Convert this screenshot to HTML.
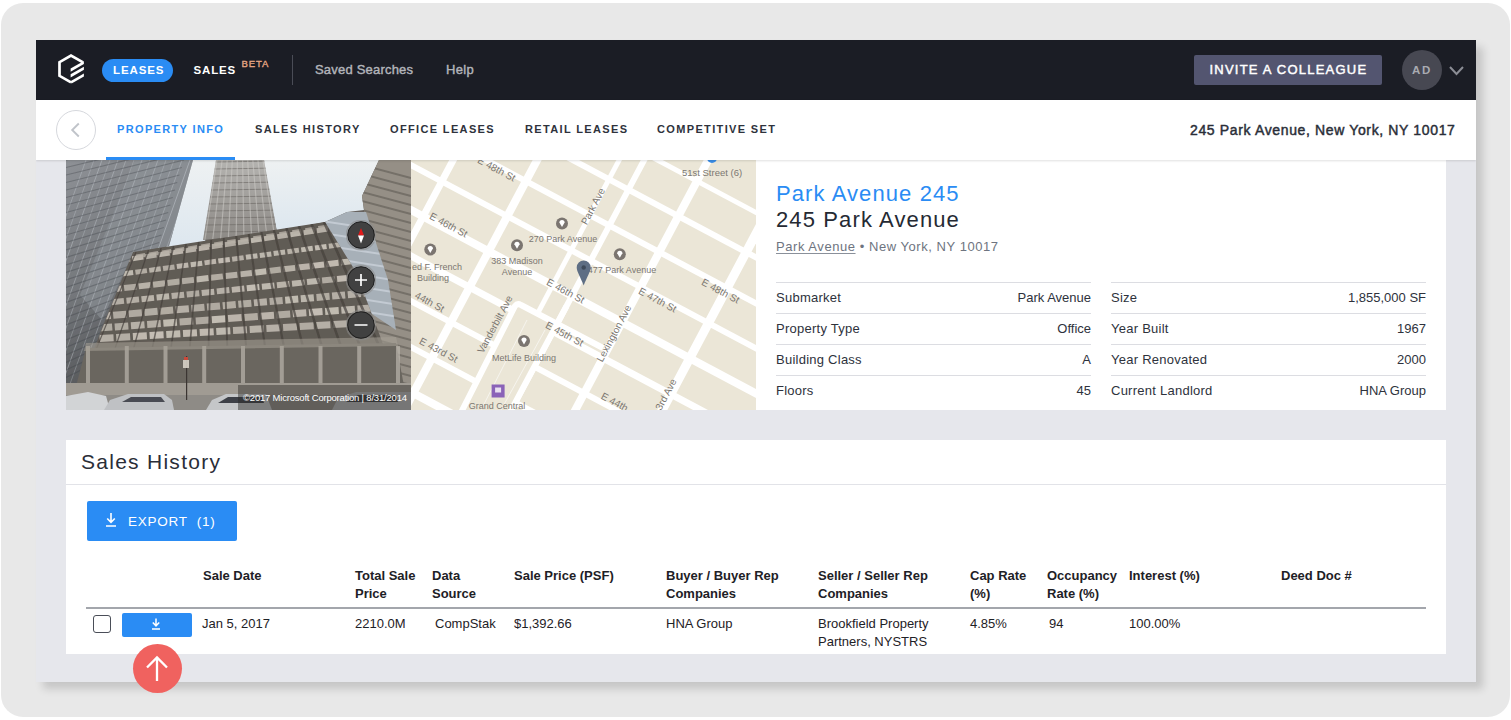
<!DOCTYPE html>
<html><head><meta charset="utf-8">
<style>
*{margin:0;padding:0;box-sizing:border-box}
html,body{width:1511px;height:720px;overflow:hidden;background:#fff;font-family:"Liberation Sans",sans-serif}
.abs{position:absolute}
#frame{position:absolute;left:1px;top:3px;width:1509px;height:714px;background:#e8e8e8;border-radius:22px}
#app{position:absolute;left:36px;top:40px;width:1440px;height:642px;background:#e6e7ec;overflow:hidden;box-shadow:7px 7px 8px rgba(0,0,0,.15)}
#nav{position:absolute;left:0;top:0;width:1440px;height:60px;background:#1b1d25}
#sub{position:absolute;left:0;top:60px;width:1440px;height:60px;background:#fff;box-shadow:0 1px 2px rgba(0,0,0,.12);z-index:5}
.t{position:absolute;white-space:nowrap;line-height:1}
.navcap{font-size:12px;font-weight:bold;letter-spacing:1.1px;color:#fff}
.tab{font-size:11px;font-weight:bold;letter-spacing:1.35px;color:#2e323c;top:24px}
#card1{position:absolute;left:30px;top:120px;width:1380px;height:250px;background:#fff}
#card2{position:absolute;left:30px;top:400px;width:1380px;height:214px;background:#fff}
.lbl{font-size:13px;color:#2e323c;letter-spacing:.25px}
.row{position:absolute;height:1px;background:#dcdde2}
.th{font-size:13px;font-weight:bold;color:#1e2126;line-height:18px;margin-top:1px}
.td{font-size:13px;color:#1e2126;line-height:18px}
</style></head>
<body>
<div id="frame"></div>
<div id="app">
  <div id="nav">
    <svg class="abs" style="left:0;top:0" width="80" height="60" viewBox="36 40 80 60">
      <polyline points="82.6,62.2 71,55.6 59.5,62.2 59.5,75.8 71,82.4" fill="none" stroke="#fff" stroke-width="2.7" stroke-linejoin="miter"/>
      <polygon points="70.4,81.2 83.9,73.5 83.9,76.6 71.6,83.6" fill="#fff"/>
      <polygon points="70.6,68.6 83.9,61.0 83.9,64.1 70.6,71.7" fill="#fff"/>
      <polygon points="70.6,74.3 83.9,66.7 83.9,69.8 70.6,77.4" fill="#fff"/>
    </svg>
    <div class="abs" style="left:66px;top:19px;width:71px;height:23px;border-radius:12px;background:#2a8cf4"></div>
    <div class="t navcap" style="left:77px;top:24.5px;font-size:11.5px;letter-spacing:.9px">LEASES</div>
    <div class="t navcap" style="left:157.5px;top:24.5px;font-size:11.5px;letter-spacing:.85px">SALES</div>
    <div class="t" style="left:205.5px;top:19px;font-size:9.5px;-webkit-text-stroke:.35px #e6a583;letter-spacing:.9px;color:#e6a583">BETA</div>
    <div class="abs" style="left:256px;top:15px;width:1px;height:30px;background:#4a4c56"></div>
    <div class="t" style="left:279px;top:23px;font-size:13px;-webkit-text-stroke:.4px #b3b5bb;color:#b3b5bb;letter-spacing:.2px">Saved Searches</div>
    <div class="t" style="left:410px;top:23px;font-size:13px;-webkit-text-stroke:.4px #b3b5bb;color:#b3b5bb;letter-spacing:.3px">Help</div>
    <div class="abs" style="left:1158px;top:15px;width:188px;height:30px;border-radius:2px;background:#535570"></div>
    <div class="t" style="left:1173.5px;top:23px;font-size:13px;-webkit-text-stroke:.45px #fff;color:#fff;letter-spacing:1.22px">INVITE A COLLEAGUE</div>
    <div class="abs" style="left:1366px;top:10px;width:40px;height:40px;border-radius:50%;background:#474852"></div>
    <div class="t" style="left:1376px;top:25px;font-size:11.5px;font-weight:bold;color:#a9abb1;letter-spacing:1.6px">AD</div>
    <svg class="abs" style="left:1412px;top:24px" width="18" height="14" viewBox="0 0 18 14"><polyline points="2,3 8.5,10 15,3" fill="none" stroke="#8b8d95" stroke-width="2"/></svg>
  </div>
  <div id="sub">
    <div class="abs" style="left:20px;top:10px;width:40px;height:40px;border-radius:50%;border:1px solid #d6d8dd"></div>
    <svg class="abs" style="left:34px;top:22px" width="12" height="16" viewBox="0 0 12 16"><polyline points="8.8,1.5 2.2,8 8.8,14.5" fill="none" stroke="#c0c4ca" stroke-width="1.9"/></svg>
    <div class="t tab" style="left:81px;color:#2a8cf4">PROPERTY INFO</div>
    <div class="abs" style="left:70px;top:57px;width:129px;height:3px;background:#2a8cf4"></div>
    <div class="t tab" style="left:219px">SALES HISTORY</div>
    <div class="t tab" style="left:354px">OFFICE LEASES</div>
    <div class="t tab" style="left:489px">RETAIL LEASES</div>
    <div class="t tab" style="left:621px">COMPETITIVE SET</div>
    <div class="t" style="left:1154px;top:23px;font-size:14px;font-weight:normal;-webkit-text-stroke:.45px #2a2e38;color:#2a2e38;letter-spacing:.64px">245 Park Avenue, New York, NY 10017</div>
  </div>

  <div id="card1">
    <div id="photo" class="abs" style="left:0;top:0;width:345px;height:250px;overflow:hidden"><svg width="345" height="250" viewBox="0 0 345 250"><defs><linearGradient id="lt" x1="0" y1="0" x2="0.3" y2="1"><stop offset="0" stop-color="#8e9196"/><stop offset="0.55" stop-color="#75787c"/><stop offset="1" stop-color="#55575a"/></linearGradient><linearGradient id="sky" x1="0" y1="0" x2="0" y2="1"><stop offset="0" stop-color="#eef1f2"/><stop offset="1" stop-color="#dde7ef"/></linearGradient><linearGradient id="ct" x1="0" y1="0" x2="0" y2="1"><stop offset="0" stop-color="#b4b3b0"/><stop offset="1" stop-color="#8c8985"/></linearGradient><filter id="bl" x="0" y="0" width="1" height="1"><feGaussianBlur stdDeviation="0.6"/></filter><clipPath id="fac"><polygon points="67,92 259,62 290,112 332,224 14,224"/></clipPath><clipPath id="lft"><polygon points="0,0 127,0 103,86 67,93 35,170 18,224 0,224"/></clipPath><clipPath id="gls"><polygon points="259,62 281,52 300,52 322,120 330,170 300,150"/></clipPath><clipPath id="rtw"><polygon points="313,0 345,0 345,226 322,226 300,140 298,50 296,36"/></clipPath></defs>
<g filter="url(#bl)">
<rect width="345" height="250" fill="#66625e"/>
<polygon points="120,0 152,0 139,82 100,88" fill="url(#sky)"/>
<polygon points="196,0 313,0 296,36 298,50 281,52 259,62 211,72" fill="url(#sky)"/>
<polygon points="0,0 127,0 103,86 67,93 35,170 18,224 0,224" fill="url(#lt)"/>
<polygon points="69,0 127,0 103,86 67,93 36,160 14,135" fill="#8f959b" opacity=".55"/>
<g clip-path="url(#lft)">
<line x1="20" y1="0" x2="-60" y2="224" stroke="#c4cad0" stroke-width="0.9" opacity="0.43"/>
<line x1="28" y1="0" x2="-52" y2="224" stroke="#c4cad0" stroke-width="0.9" opacity="0.39"/>
<line x1="36" y1="0" x2="-44" y2="224" stroke="#c4cad0" stroke-width="0.9" opacity="0.51"/>
<line x1="44" y1="0" x2="-36" y2="224" stroke="#c4cad0" stroke-width="0.9" opacity="0.37"/>
<line x1="52" y1="0" x2="-28" y2="224" stroke="#c4cad0" stroke-width="0.9" opacity="0.48"/>
<line x1="60" y1="0" x2="-20" y2="224" stroke="#c4cad0" stroke-width="0.9" opacity="0.44"/>
<line x1="68" y1="0" x2="-12" y2="224" stroke="#c4cad0" stroke-width="0.9" opacity="0.36"/>
<line x1="76" y1="0" x2="-4" y2="224" stroke="#c4cad0" stroke-width="0.9" opacity="0.48"/>
<line x1="84" y1="0" x2="4" y2="224" stroke="#c4cad0" stroke-width="0.9" opacity="0.36"/>
<line x1="92" y1="0" x2="12" y2="224" stroke="#c4cad0" stroke-width="0.9" opacity="0.46"/>
<line x1="100" y1="0" x2="20" y2="224" stroke="#c4cad0" stroke-width="0.9" opacity="0.37"/>
<line x1="108" y1="0" x2="28" y2="224" stroke="#c4cad0" stroke-width="0.9" opacity="0.37"/>
<line x1="116" y1="0" x2="36" y2="224" stroke="#c4cad0" stroke-width="0.9" opacity="0.46"/>
<line x1="124" y1="0" x2="44" y2="224" stroke="#c4cad0" stroke-width="0.9" opacity="0.56"/>
<line x1="132" y1="0" x2="52" y2="224" stroke="#c4cad0" stroke-width="0.9" opacity="0.38"/>
<line x1="140" y1="0" x2="60" y2="224" stroke="#c4cad0" stroke-width="0.9" opacity="0.41"/>
<line x1="148" y1="0" x2="68" y2="224" stroke="#c4cad0" stroke-width="0.9" opacity="0.51"/>
<line x1="156" y1="0" x2="76" y2="224" stroke="#c4cad0" stroke-width="0.9" opacity="0.59"/>
<line x1="164" y1="0" x2="84" y2="224" stroke="#c4cad0" stroke-width="0.9" opacity="0.49"/>
<line x1="172" y1="0" x2="92" y2="224" stroke="#c4cad0" stroke-width="0.9" opacity="0.45"/>
<line x1="180" y1="0" x2="100" y2="224" stroke="#c4cad0" stroke-width="0.9" opacity="0.59"/>
<line x1="188" y1="0" x2="108" y2="224" stroke="#c4cad0" stroke-width="0.9" opacity="0.36"/>
<line x1="0" y1="0.0" x2="127.0" y2="-30.0" stroke="#3e4248" stroke-width="1.2" opacity=".35"/>
<line x1="0" y1="7.5" x2="124.8" y2="-22.5" stroke="#3e4248" stroke-width="1.2" opacity=".35"/>
<line x1="0" y1="15.0" x2="122.5" y2="-15.0" stroke="#3e4248" stroke-width="1.2" opacity=".35"/>
<line x1="0" y1="22.5" x2="120.2" y2="-7.5" stroke="#3e4248" stroke-width="1.2" opacity=".35"/>
<line x1="0" y1="30.0" x2="118.0" y2="0.0" stroke="#3e4248" stroke-width="1.2" opacity=".35"/>
<line x1="0" y1="37.5" x2="115.8" y2="7.5" stroke="#3e4248" stroke-width="1.2" opacity=".35"/>
<line x1="0" y1="45.0" x2="113.5" y2="15.0" stroke="#3e4248" stroke-width="1.2" opacity=".35"/>
<line x1="0" y1="52.5" x2="111.2" y2="22.5" stroke="#3e4248" stroke-width="1.2" opacity=".35"/>
<line x1="0" y1="60.0" x2="109.0" y2="30.0" stroke="#3e4248" stroke-width="1.2" opacity=".35"/>
<line x1="0" y1="67.5" x2="106.8" y2="37.5" stroke="#3e4248" stroke-width="1.2" opacity=".35"/>
<line x1="0" y1="75.0" x2="104.5" y2="45.0" stroke="#3e4248" stroke-width="1.2" opacity=".35"/>
<line x1="0" y1="82.5" x2="102.2" y2="52.5" stroke="#3e4248" stroke-width="1.2" opacity=".35"/>
<line x1="0" y1="90.0" x2="100.0" y2="60.0" stroke="#3e4248" stroke-width="1.2" opacity=".35"/>
<line x1="0" y1="97.5" x2="97.8" y2="67.5" stroke="#3e4248" stroke-width="1.2" opacity=".35"/>
<line x1="0" y1="105.0" x2="95.5" y2="75.0" stroke="#3e4248" stroke-width="1.2" opacity=".35"/>
<line x1="0" y1="112.5" x2="93.2" y2="82.5" stroke="#3e4248" stroke-width="1.2" opacity=".35"/>
<line x1="0" y1="120.0" x2="91.0" y2="90.0" stroke="#3e4248" stroke-width="1.2" opacity=".35"/>
<line x1="0" y1="127.5" x2="88.8" y2="97.5" stroke="#3e4248" stroke-width="1.2" opacity=".35"/>
<line x1="0" y1="135.0" x2="86.5" y2="105.0" stroke="#3e4248" stroke-width="1.2" opacity=".35"/>
<line x1="0" y1="142.5" x2="84.2" y2="112.5" stroke="#3e4248" stroke-width="1.2" opacity=".35"/>
<line x1="0" y1="150.0" x2="82.0" y2="120.0" stroke="#3e4248" stroke-width="1.2" opacity=".35"/>
<line x1="0" y1="157.5" x2="79.8" y2="127.5" stroke="#3e4248" stroke-width="1.2" opacity=".35"/>
<line x1="0" y1="165.0" x2="77.5" y2="135.0" stroke="#3e4248" stroke-width="1.2" opacity=".35"/>
<line x1="0" y1="172.5" x2="75.2" y2="142.5" stroke="#3e4248" stroke-width="1.2" opacity=".35"/>
<line x1="0" y1="180.0" x2="73.0" y2="150.0" stroke="#3e4248" stroke-width="1.2" opacity=".35"/>
<line x1="0" y1="187.5" x2="70.8" y2="157.5" stroke="#3e4248" stroke-width="1.2" opacity=".35"/>
<line x1="0" y1="195.0" x2="68.5" y2="165.0" stroke="#3e4248" stroke-width="1.2" opacity=".35"/>
<line x1="0" y1="202.5" x2="66.2" y2="172.5" stroke="#3e4248" stroke-width="1.2" opacity=".35"/>
<line x1="0" y1="210.0" x2="64.0" y2="180.0" stroke="#3e4248" stroke-width="1.2" opacity=".35"/>
<line x1="0" y1="217.5" x2="61.8" y2="187.5" stroke="#3e4248" stroke-width="1.2" opacity=".35"/>
</g>
<polygon points="150,0 198,0 211,72 137,80" fill="url(#ct)"/>
<line x1="149.7" y1="2" x2="198.4" y2="1.2" stroke="#6a6662" stroke-width="1" opacity=".6"/>
<line x1="148.6" y1="9" x2="199.6" y2="8.2" stroke="#6a6662" stroke-width="1" opacity=".6"/>
<line x1="147.4" y1="16" x2="200.9" y2="15.2" stroke="#6a6662" stroke-width="1" opacity=".6"/>
<line x1="146.3" y1="23" x2="202.1" y2="22.2" stroke="#6a6662" stroke-width="1" opacity=".6"/>
<line x1="145.2" y1="30" x2="203.4" y2="29.2" stroke="#6a6662" stroke-width="1" opacity=".6"/>
<line x1="144.1" y1="37" x2="204.7" y2="36.2" stroke="#6a6662" stroke-width="1" opacity=".6"/>
<line x1="143.0" y1="44" x2="205.9" y2="43.2" stroke="#6a6662" stroke-width="1" opacity=".6"/>
<line x1="141.8" y1="51" x2="207.2" y2="50.2" stroke="#6a6662" stroke-width="1" opacity=".6"/>
<line x1="140.7" y1="58" x2="208.4" y2="57.2" stroke="#6a6662" stroke-width="1" opacity=".6"/>
<line x1="139.6" y1="65" x2="209.7" y2="64.2" stroke="#6a6662" stroke-width="1" opacity=".6"/>
<line x1="138.5" y1="72" x2="211.0" y2="71.2" stroke="#6a6662" stroke-width="1" opacity=".6"/>
<line x1="151.0" y1="0" x2="139.0" y2="79" stroke="#d2d0cc" stroke-width="1.2" opacity=".5"/>
<line x1="156.1" y1="0" x2="146.8" y2="79" stroke="#d2d0cc" stroke-width="1.2" opacity=".5"/>
<line x1="161.2" y1="0" x2="154.6" y2="79" stroke="#d2d0cc" stroke-width="1.2" opacity=".5"/>
<line x1="166.3" y1="0" x2="162.3" y2="79" stroke="#d2d0cc" stroke-width="1.2" opacity=".5"/>
<line x1="171.4" y1="0" x2="170.1" y2="79" stroke="#d2d0cc" stroke-width="1.2" opacity=".5"/>
<line x1="176.6" y1="0" x2="177.9" y2="79" stroke="#d2d0cc" stroke-width="1.2" opacity=".5"/>
<line x1="181.7" y1="0" x2="185.7" y2="79" stroke="#d2d0cc" stroke-width="1.2" opacity=".5"/>
<line x1="186.8" y1="0" x2="193.4" y2="79" stroke="#d2d0cc" stroke-width="1.2" opacity=".5"/>
<line x1="191.9" y1="0" x2="201.2" y2="79" stroke="#d2d0cc" stroke-width="1.2" opacity=".5"/>
<line x1="197.0" y1="0" x2="209.0" y2="79" stroke="#d2d0cc" stroke-width="1.2" opacity=".5"/>
<polygon points="313,0 345,0 345,226 322,226 300,140 298,50 296,36" fill="#958f86"/>
<g clip-path="url(#rtw)">
<line x1="292" y1="4" x2="345" y2="18" stroke="#5a5650" stroke-width="2" opacity=".55"/>
<line x1="292" y1="13" x2="345" y2="27" stroke="#5a5650" stroke-width="2" opacity=".55"/>
<line x1="292" y1="22" x2="345" y2="36" stroke="#5a5650" stroke-width="2" opacity=".55"/>
<line x1="292" y1="31" x2="345" y2="45" stroke="#5a5650" stroke-width="2" opacity=".55"/>
<line x1="292" y1="40" x2="345" y2="54" stroke="#5a5650" stroke-width="2" opacity=".55"/>
<line x1="292" y1="49" x2="345" y2="63" stroke="#5a5650" stroke-width="2" opacity=".55"/>
<line x1="292" y1="58" x2="345" y2="72" stroke="#5a5650" stroke-width="2" opacity=".55"/>
<line x1="292" y1="67" x2="345" y2="81" stroke="#5a5650" stroke-width="2" opacity=".55"/>
<line x1="292" y1="76" x2="345" y2="90" stroke="#5a5650" stroke-width="2" opacity=".55"/>
<line x1="292" y1="85" x2="345" y2="99" stroke="#5a5650" stroke-width="2" opacity=".55"/>
<line x1="292" y1="94" x2="345" y2="108" stroke="#5a5650" stroke-width="2" opacity=".55"/>
<line x1="292" y1="103" x2="345" y2="117" stroke="#5a5650" stroke-width="2" opacity=".55"/>
<line x1="292" y1="112" x2="345" y2="126" stroke="#5a5650" stroke-width="2" opacity=".55"/>
<line x1="292" y1="121" x2="345" y2="135" stroke="#5a5650" stroke-width="2" opacity=".55"/>
<line x1="292" y1="130" x2="345" y2="144" stroke="#5a5650" stroke-width="2" opacity=".55"/>
<line x1="292" y1="139" x2="345" y2="153" stroke="#5a5650" stroke-width="2" opacity=".55"/>
<line x1="292" y1="148" x2="345" y2="162" stroke="#5a5650" stroke-width="2" opacity=".55"/>
<line x1="292" y1="157" x2="345" y2="171" stroke="#5a5650" stroke-width="2" opacity=".55"/>
<line x1="292" y1="166" x2="345" y2="180" stroke="#5a5650" stroke-width="2" opacity=".55"/>
<line x1="292" y1="175" x2="345" y2="189" stroke="#5a5650" stroke-width="2" opacity=".55"/>
<line x1="292" y1="184" x2="345" y2="198" stroke="#5a5650" stroke-width="2" opacity=".55"/>
<line x1="292" y1="193" x2="345" y2="207" stroke="#5a5650" stroke-width="2" opacity=".55"/>
<line x1="292" y1="202" x2="345" y2="216" stroke="#5a5650" stroke-width="2" opacity=".55"/>
<line x1="292" y1="211" x2="345" y2="225" stroke="#5a5650" stroke-width="2" opacity=".55"/>
<line x1="292" y1="220" x2="345" y2="234" stroke="#5a5650" stroke-width="2" opacity=".55"/>
<line x1="292" y1="229" x2="345" y2="243" stroke="#5a5650" stroke-width="2" opacity=".55"/>
</g>
<polygon points="259,62 281,52 300,52 322,120 330,170 300,150" fill="#a7b0b8"/>
<g clip-path="url(#gls)">
<line x1="250" y1="60" x2="340" y2="74" stroke="#d6dde4" stroke-width="2" opacity=".6"/>
<line x1="250" y1="72" x2="340" y2="86" stroke="#d6dde4" stroke-width="2" opacity=".6"/>
<line x1="250" y1="84" x2="340" y2="98" stroke="#d6dde4" stroke-width="2" opacity=".6"/>
<line x1="250" y1="96" x2="340" y2="110" stroke="#d6dde4" stroke-width="2" opacity=".6"/>
<line x1="250" y1="108" x2="340" y2="122" stroke="#d6dde4" stroke-width="2" opacity=".6"/>
<line x1="250" y1="120" x2="340" y2="134" stroke="#d6dde4" stroke-width="2" opacity=".6"/>
<line x1="250" y1="132" x2="340" y2="146" stroke="#d6dde4" stroke-width="2" opacity=".6"/>
<line x1="250" y1="144" x2="340" y2="158" stroke="#d6dde4" stroke-width="2" opacity=".6"/>
</g>
<polygon points="67,92 259,62 290,112 332,224 14,224" fill="#615b55"/>
<g clip-path="url(#fac)">
<rect x="0.0" y="106.1" width="11.1" height="5" fill="#c9c3b9" opacity="0.92" transform="rotate(-8.6 0.0 106.1)"/>
<rect x="13.2" y="104.1" width="11.1" height="5" fill="#c9c3b9" opacity="0.81" transform="rotate(-8.6 13.2 104.1)"/>
<rect x="26.4" y="102.1" width="11.1" height="5" fill="#c9c3b9" opacity="0.78" transform="rotate(-8.6 26.4 102.1)"/>
<rect x="39.5" y="100.2" width="11.1" height="5" fill="#c9c3b9" opacity="0.77" transform="rotate(-8.6 39.5 100.2)"/>
<rect x="52.7" y="98.2" width="11.1" height="5" fill="#c9c3b9" opacity="0.81" transform="rotate(-8.6 52.7 98.2)"/>
<rect x="65.9" y="96.2" width="11.1" height="5" fill="#c9c3b9" opacity="0.91" transform="rotate(-8.6 65.9 96.2)"/>
<rect x="79.1" y="94.2" width="11.1" height="5" fill="#c9c3b9" opacity="0.79" transform="rotate(-8.6 79.1 94.2)"/>
<rect x="92.3" y="92.2" width="11.1" height="5" fill="#c9c3b9" opacity="0.87" transform="rotate(-8.6 92.3 92.2)"/>
<rect x="105.5" y="90.2" width="11.1" height="5" fill="#c9c3b9" opacity="0.88" transform="rotate(-8.6 105.5 90.2)"/>
<rect x="118.6" y="88.2" width="11.1" height="5" fill="#c9c3b9" opacity="0.82" transform="rotate(-8.6 118.6 88.2)"/>
<rect x="131.8" y="86.2" width="11.1" height="5" fill="#c9c3b9" opacity="0.86" transform="rotate(-8.6 131.8 86.2)"/>
<rect x="145.0" y="84.2" width="11.1" height="5" fill="#c9c3b9" opacity="0.76" transform="rotate(-8.6 145.0 84.2)"/>
<rect x="158.2" y="82.2" width="11.1" height="5" fill="#c9c3b9" opacity="0.76" transform="rotate(-8.6 158.2 82.2)"/>
<rect x="171.4" y="80.2" width="11.1" height="5" fill="#c9c3b9" opacity="0.79" transform="rotate(-8.6 171.4 80.2)"/>
<rect x="184.5" y="78.2" width="11.1" height="5" fill="#c9c3b9" opacity="0.89" transform="rotate(-8.6 184.5 78.2)"/>
<rect x="197.7" y="76.2" width="11.1" height="5" fill="#c9c3b9" opacity="0.84" transform="rotate(-8.6 197.7 76.2)"/>
<rect x="210.9" y="74.2" width="11.1" height="5" fill="#c9c3b9" opacity="0.81" transform="rotate(-8.6 210.9 74.2)"/>
<rect x="224.1" y="72.2" width="11.1" height="5" fill="#c9c3b9" opacity="0.87" transform="rotate(-8.6 224.1 72.2)"/>
<rect x="237.3" y="70.2" width="11.1" height="5" fill="#c9c3b9" opacity="0.84" transform="rotate(-8.6 237.3 70.2)"/>
<rect x="250.5" y="68.2" width="11.1" height="5" fill="#c9c3b9" opacity="0.81" transform="rotate(-8.6 250.5 68.2)"/>
<rect x="263.6" y="66.3" width="11.1" height="5" fill="#c9c3b9" opacity="0.91" transform="rotate(-8.6 263.6 66.3)"/>
<rect x="276.8" y="64.3" width="11.1" height="5" fill="#c9c3b9" opacity="0.89" transform="rotate(-8.6 276.8 64.3)"/>
<rect x="290.0" y="62.3" width="11.1" height="5" fill="#c9c3b9" opacity="0.80" transform="rotate(-8.6 290.0 62.3)"/>
<rect x="303.2" y="60.3" width="11.1" height="5" fill="#c9c3b9" opacity="0.86" transform="rotate(-8.6 303.2 60.3)"/>
<rect x="316.4" y="58.3" width="11.1" height="5" fill="#c9c3b9" opacity="0.86" transform="rotate(-8.6 316.4 58.3)"/>
<rect x="329.5" y="56.3" width="11.1" height="5" fill="#c9c3b9" opacity="0.93" transform="rotate(-8.6 329.5 56.3)"/>
<rect x="342.7" y="54.3" width="11.1" height="5" fill="#c9c3b9" opacity="0.90" transform="rotate(-8.6 342.7 54.3)"/>
<rect x="0.0" y="119.0" width="11.6" height="5" fill="#c9c3b9" opacity="0.81" transform="rotate(-7.7 0.0 119.0)"/>
<rect x="13.8" y="117.2" width="11.6" height="5" fill="#c9c3b9" opacity="0.95" transform="rotate(-7.7 13.8 117.2)"/>
<rect x="27.6" y="115.3" width="11.6" height="5" fill="#c9c3b9" opacity="0.77" transform="rotate(-7.7 27.6 115.3)"/>
<rect x="41.5" y="113.4" width="11.6" height="5" fill="#c9c3b9" opacity="0.83" transform="rotate(-7.7 41.5 113.4)"/>
<rect x="55.3" y="111.6" width="11.6" height="5" fill="#c9c3b9" opacity="0.90" transform="rotate(-7.7 55.3 111.6)"/>
<rect x="69.1" y="109.7" width="11.6" height="5" fill="#c9c3b9" opacity="0.78" transform="rotate(-7.7 69.1 109.7)"/>
<rect x="82.9" y="107.9" width="11.6" height="5" fill="#c9c3b9" opacity="0.85" transform="rotate(-7.7 82.9 107.9)"/>
<rect x="96.7" y="106.0" width="11.6" height="5" fill="#c9c3b9" opacity="0.76" transform="rotate(-7.7 96.7 106.0)"/>
<rect x="110.5" y="104.1" width="11.6" height="5" fill="#c9c3b9" opacity="0.88" transform="rotate(-7.7 110.5 104.1)"/>
<rect x="124.4" y="102.3" width="11.6" height="5" fill="#c9c3b9" opacity="0.90" transform="rotate(-7.7 124.4 102.3)"/>
<rect x="138.2" y="100.4" width="11.6" height="5" fill="#c9c3b9" opacity="0.86" transform="rotate(-7.7 138.2 100.4)"/>
<rect x="152.0" y="98.5" width="11.6" height="5" fill="#c9c3b9" opacity="0.93" transform="rotate(-7.7 152.0 98.5)"/>
<rect x="165.8" y="96.7" width="11.6" height="5" fill="#c9c3b9" opacity="0.81" transform="rotate(-7.7 165.8 96.7)"/>
<rect x="179.6" y="94.8" width="11.6" height="5" fill="#c9c3b9" opacity="0.89" transform="rotate(-7.7 179.6 94.8)"/>
<rect x="193.5" y="93.0" width="11.6" height="5" fill="#c9c3b9" opacity="0.87" transform="rotate(-7.7 193.5 93.0)"/>
<rect x="207.3" y="91.1" width="11.6" height="5" fill="#c9c3b9" opacity="0.87" transform="rotate(-7.7 207.3 91.1)"/>
<rect x="221.1" y="89.2" width="11.6" height="5" fill="#c9c3b9" opacity="0.84" transform="rotate(-7.7 221.1 89.2)"/>
<rect x="234.9" y="87.4" width="11.6" height="5" fill="#c9c3b9" opacity="0.92" transform="rotate(-7.7 234.9 87.4)"/>
<rect x="248.7" y="85.5" width="11.6" height="5" fill="#c9c3b9" opacity="0.94" transform="rotate(-7.7 248.7 85.5)"/>
<rect x="262.5" y="83.7" width="11.6" height="5" fill="#c9c3b9" opacity="0.84" transform="rotate(-7.7 262.5 83.7)"/>
<rect x="276.4" y="81.8" width="11.6" height="5" fill="#c9c3b9" opacity="0.88" transform="rotate(-7.7 276.4 81.8)"/>
<rect x="290.2" y="79.9" width="11.6" height="5" fill="#c9c3b9" opacity="0.76" transform="rotate(-7.7 290.2 79.9)"/>
<rect x="304.0" y="78.1" width="11.6" height="5" fill="#c9c3b9" opacity="0.89" transform="rotate(-7.7 304.0 78.1)"/>
<rect x="317.8" y="76.2" width="11.6" height="5" fill="#c9c3b9" opacity="0.88" transform="rotate(-7.7 317.8 76.2)"/>
<rect x="331.6" y="74.3" width="11.6" height="5" fill="#c9c3b9" opacity="0.95" transform="rotate(-7.7 331.6 74.3)"/>
<rect x="0.0" y="131.9" width="12.1" height="6" fill="#c9c3b9" opacity="0.91" transform="rotate(-6.7 0.0 131.9)"/>
<rect x="14.5" y="130.2" width="12.1" height="6" fill="#c9c3b9" opacity="0.81" transform="rotate(-6.7 14.5 130.2)"/>
<rect x="28.9" y="128.5" width="12.1" height="6" fill="#c9c3b9" opacity="0.83" transform="rotate(-6.7 28.9 128.5)"/>
<rect x="43.4" y="126.8" width="12.1" height="6" fill="#c9c3b9" opacity="0.88" transform="rotate(-6.7 43.4 126.8)"/>
<rect x="57.8" y="125.1" width="12.1" height="6" fill="#c9c3b9" opacity="0.75" transform="rotate(-6.7 57.8 125.1)"/>
<rect x="72.3" y="123.4" width="12.1" height="6" fill="#c9c3b9" opacity="0.84" transform="rotate(-6.7 72.3 123.4)"/>
<rect x="86.7" y="121.7" width="12.1" height="6" fill="#c9c3b9" opacity="0.78" transform="rotate(-6.7 86.7 121.7)"/>
<rect x="101.2" y="120.0" width="12.1" height="6" fill="#c9c3b9" opacity="0.77" transform="rotate(-6.7 101.2 120.0)"/>
<rect x="115.6" y="118.3" width="12.1" height="6" fill="#c9c3b9" opacity="0.76" transform="rotate(-6.7 115.6 118.3)"/>
<rect x="130.1" y="116.5" width="12.1" height="6" fill="#c9c3b9" opacity="0.90" transform="rotate(-6.7 130.1 116.5)"/>
<rect x="144.5" y="114.8" width="12.1" height="6" fill="#c9c3b9" opacity="0.78" transform="rotate(-6.7 144.5 114.8)"/>
<rect x="159.0" y="113.1" width="12.1" height="6" fill="#c9c3b9" opacity="0.80" transform="rotate(-6.7 159.0 113.1)"/>
<rect x="173.5" y="111.4" width="12.1" height="6" fill="#c9c3b9" opacity="0.83" transform="rotate(-6.7 173.5 111.4)"/>
<rect x="187.9" y="109.7" width="12.1" height="6" fill="#c9c3b9" opacity="0.92" transform="rotate(-6.7 187.9 109.7)"/>
<rect x="202.4" y="108.0" width="12.1" height="6" fill="#c9c3b9" opacity="0.77" transform="rotate(-6.7 202.4 108.0)"/>
<rect x="216.8" y="106.3" width="12.1" height="6" fill="#c9c3b9" opacity="0.84" transform="rotate(-6.7 216.8 106.3)"/>
<rect x="231.3" y="104.6" width="12.1" height="6" fill="#c9c3b9" opacity="0.86" transform="rotate(-6.7 231.3 104.6)"/>
<rect x="245.7" y="102.9" width="12.1" height="6" fill="#c9c3b9" opacity="0.93" transform="rotate(-6.7 245.7 102.9)"/>
<rect x="260.2" y="101.2" width="12.1" height="6" fill="#c9c3b9" opacity="0.91" transform="rotate(-6.7 260.2 101.2)"/>
<rect x="274.6" y="99.5" width="12.1" height="6" fill="#c9c3b9" opacity="0.92" transform="rotate(-6.7 274.6 99.5)"/>
<rect x="289.1" y="97.8" width="12.1" height="6" fill="#c9c3b9" opacity="0.81" transform="rotate(-6.7 289.1 97.8)"/>
<rect x="303.5" y="96.0" width="12.1" height="6" fill="#c9c3b9" opacity="0.83" transform="rotate(-6.7 303.5 96.0)"/>
<rect x="318.0" y="94.3" width="12.1" height="6" fill="#c9c3b9" opacity="0.82" transform="rotate(-6.7 318.0 94.3)"/>
<rect x="332.5" y="92.6" width="12.1" height="6" fill="#c9c3b9" opacity="0.93" transform="rotate(-6.7 332.5 92.6)"/>
<rect x="0.0" y="143.9" width="12.6" height="6" fill="#c9c3b9" opacity="0.94" transform="rotate(-5.9 0.0 143.9)"/>
<rect x="15.0" y="142.3" width="12.6" height="6" fill="#c9c3b9" opacity="0.78" transform="rotate(-5.9 15.0 142.3)"/>
<rect x="30.1" y="140.8" width="12.6" height="6" fill="#c9c3b9" opacity="0.79" transform="rotate(-5.9 30.1 140.8)"/>
<rect x="45.1" y="139.2" width="12.6" height="6" fill="#c9c3b9" opacity="0.80" transform="rotate(-5.9 45.1 139.2)"/>
<rect x="60.2" y="137.7" width="12.6" height="6" fill="#c9c3b9" opacity="0.80" transform="rotate(-5.9 60.2 137.7)"/>
<rect x="75.2" y="136.2" width="12.6" height="6" fill="#c9c3b9" opacity="0.85" transform="rotate(-5.9 75.2 136.2)"/>
<rect x="90.3" y="134.6" width="12.6" height="6" fill="#c9c3b9" opacity="0.87" transform="rotate(-5.9 90.3 134.6)"/>
<rect x="105.3" y="133.1" width="12.6" height="6" fill="#c9c3b9" opacity="0.80" transform="rotate(-5.9 105.3 133.1)"/>
<rect x="120.4" y="131.5" width="12.6" height="6" fill="#c9c3b9" opacity="0.75" transform="rotate(-5.9 120.4 131.5)"/>
<rect x="135.4" y="130.0" width="12.6" height="6" fill="#c9c3b9" opacity="0.83" transform="rotate(-5.9 135.4 130.0)"/>
<rect x="150.5" y="128.4" width="12.6" height="6" fill="#c9c3b9" opacity="0.82" transform="rotate(-5.9 150.5 128.4)"/>
<rect x="165.5" y="126.9" width="12.6" height="6" fill="#c9c3b9" opacity="0.86" transform="rotate(-5.9 165.5 126.9)"/>
<rect x="180.5" y="125.3" width="12.6" height="6" fill="#c9c3b9" opacity="0.94" transform="rotate(-5.9 180.5 125.3)"/>
<rect x="195.6" y="123.8" width="12.6" height="6" fill="#c9c3b9" opacity="0.89" transform="rotate(-5.9 195.6 123.8)"/>
<rect x="210.6" y="122.2" width="12.6" height="6" fill="#c9c3b9" opacity="0.85" transform="rotate(-5.9 210.6 122.2)"/>
<rect x="225.7" y="120.7" width="12.6" height="6" fill="#c9c3b9" opacity="0.87" transform="rotate(-5.9 225.7 120.7)"/>
<rect x="240.7" y="119.1" width="12.6" height="6" fill="#c9c3b9" opacity="0.89" transform="rotate(-5.9 240.7 119.1)"/>
<rect x="255.8" y="117.6" width="12.6" height="6" fill="#c9c3b9" opacity="0.76" transform="rotate(-5.9 255.8 117.6)"/>
<rect x="270.8" y="116.0" width="12.6" height="6" fill="#c9c3b9" opacity="0.93" transform="rotate(-5.9 270.8 116.0)"/>
<rect x="285.9" y="114.5" width="12.6" height="6" fill="#c9c3b9" opacity="0.91" transform="rotate(-5.9 285.9 114.5)"/>
<rect x="300.9" y="112.9" width="12.6" height="6" fill="#c9c3b9" opacity="0.92" transform="rotate(-5.9 300.9 112.9)"/>
<rect x="316.0" y="111.4" width="12.6" height="6" fill="#c9c3b9" opacity="0.91" transform="rotate(-5.9 316.0 111.4)"/>
<rect x="331.0" y="109.9" width="12.6" height="6" fill="#c9c3b9" opacity="0.83" transform="rotate(-5.9 331.0 109.9)"/>
<rect x="0.0" y="155.9" width="13.1" height="7" fill="#c9c3b9" opacity="0.83" transform="rotate(-5.0 0.0 155.9)"/>
<rect x="15.6" y="154.5" width="13.1" height="7" fill="#c9c3b9" opacity="0.77" transform="rotate(-5.0 15.6 154.5)"/>
<rect x="31.3" y="153.1" width="13.1" height="7" fill="#c9c3b9" opacity="0.88" transform="rotate(-5.0 31.3 153.1)"/>
<rect x="46.9" y="151.8" width="13.1" height="7" fill="#c9c3b9" opacity="0.76" transform="rotate(-5.0 46.9 151.8)"/>
<rect x="62.5" y="150.4" width="13.1" height="7" fill="#c9c3b9" opacity="0.76" transform="rotate(-5.0 62.5 150.4)"/>
<rect x="78.2" y="149.0" width="13.1" height="7" fill="#c9c3b9" opacity="0.79" transform="rotate(-5.0 78.2 149.0)"/>
<rect x="93.8" y="147.7" width="13.1" height="7" fill="#c9c3b9" opacity="0.78" transform="rotate(-5.0 93.8 147.7)"/>
<rect x="109.5" y="146.3" width="13.1" height="7" fill="#c9c3b9" opacity="0.82" transform="rotate(-5.0 109.5 146.3)"/>
<rect x="125.1" y="144.9" width="13.1" height="7" fill="#c9c3b9" opacity="0.76" transform="rotate(-5.0 125.1 144.9)"/>
<rect x="140.7" y="143.6" width="13.1" height="7" fill="#c9c3b9" opacity="0.75" transform="rotate(-5.0 140.7 143.6)"/>
<rect x="156.4" y="142.2" width="13.1" height="7" fill="#c9c3b9" opacity="0.78" transform="rotate(-5.0 156.4 142.2)"/>
<rect x="172.0" y="140.8" width="13.1" height="7" fill="#c9c3b9" opacity="0.77" transform="rotate(-5.0 172.0 140.8)"/>
<rect x="187.6" y="139.4" width="13.1" height="7" fill="#c9c3b9" opacity="0.82" transform="rotate(-5.0 187.6 139.4)"/>
<rect x="203.3" y="138.1" width="13.1" height="7" fill="#c9c3b9" opacity="0.76" transform="rotate(-5.0 203.3 138.1)"/>
<rect x="218.9" y="136.7" width="13.1" height="7" fill="#c9c3b9" opacity="0.92" transform="rotate(-5.0 218.9 136.7)"/>
<rect x="234.5" y="135.3" width="13.1" height="7" fill="#c9c3b9" opacity="0.87" transform="rotate(-5.0 234.5 135.3)"/>
<rect x="250.2" y="134.0" width="13.1" height="7" fill="#c9c3b9" opacity="0.78" transform="rotate(-5.0 250.2 134.0)"/>
<rect x="265.8" y="132.6" width="13.1" height="7" fill="#c9c3b9" opacity="0.80" transform="rotate(-5.0 265.8 132.6)"/>
<rect x="281.5" y="131.2" width="13.1" height="7" fill="#c9c3b9" opacity="0.82" transform="rotate(-5.0 281.5 131.2)"/>
<rect x="297.1" y="129.9" width="13.1" height="7" fill="#c9c3b9" opacity="0.82" transform="rotate(-5.0 297.1 129.9)"/>
<rect x="312.7" y="128.5" width="13.1" height="7" fill="#c9c3b9" opacity="0.77" transform="rotate(-5.0 312.7 128.5)"/>
<rect x="328.4" y="127.1" width="13.1" height="7" fill="#c9c3b9" opacity="0.92" transform="rotate(-5.0 328.4 127.1)"/>
<rect x="344.0" y="125.8" width="13.1" height="7" fill="#c9c3b9" opacity="0.95" transform="rotate(-5.0 344.0 125.8)"/>
<rect x="0.0" y="166.9" width="13.6" height="7" fill="#c9c3b9" opacity="0.84" transform="rotate(-4.2 0.0 166.9)"/>
<rect x="16.2" y="165.7" width="13.6" height="7" fill="#c9c3b9" opacity="0.85" transform="rotate(-4.2 16.2 165.7)"/>
<rect x="32.4" y="164.5" width="13.6" height="7" fill="#c9c3b9" opacity="0.77" transform="rotate(-4.2 32.4 164.5)"/>
<rect x="48.5" y="163.4" width="13.6" height="7" fill="#c9c3b9" opacity="0.77" transform="rotate(-4.2 48.5 163.4)"/>
<rect x="64.7" y="162.2" width="13.6" height="7" fill="#c9c3b9" opacity="0.82" transform="rotate(-4.2 64.7 162.2)"/>
<rect x="80.9" y="161.0" width="13.6" height="7" fill="#c9c3b9" opacity="0.80" transform="rotate(-4.2 80.9 161.0)"/>
<rect x="97.1" y="159.8" width="13.6" height="7" fill="#c9c3b9" opacity="0.92" transform="rotate(-4.2 97.1 159.8)"/>
<rect x="113.3" y="158.6" width="13.6" height="7" fill="#c9c3b9" opacity="0.78" transform="rotate(-4.2 113.3 158.6)"/>
<rect x="129.5" y="157.4" width="13.6" height="7" fill="#c9c3b9" opacity="0.75" transform="rotate(-4.2 129.5 157.4)"/>
<rect x="145.6" y="156.2" width="13.6" height="7" fill="#c9c3b9" opacity="0.94" transform="rotate(-4.2 145.6 156.2)"/>
<rect x="161.8" y="155.1" width="13.6" height="7" fill="#c9c3b9" opacity="0.86" transform="rotate(-4.2 161.8 155.1)"/>
<rect x="178.0" y="153.9" width="13.6" height="7" fill="#c9c3b9" opacity="0.78" transform="rotate(-4.2 178.0 153.9)"/>
<rect x="194.2" y="152.7" width="13.6" height="7" fill="#c9c3b9" opacity="0.86" transform="rotate(-4.2 194.2 152.7)"/>
<rect x="210.4" y="151.5" width="13.6" height="7" fill="#c9c3b9" opacity="0.76" transform="rotate(-4.2 210.4 151.5)"/>
<rect x="226.5" y="150.3" width="13.6" height="7" fill="#c9c3b9" opacity="0.86" transform="rotate(-4.2 226.5 150.3)"/>
<rect x="242.7" y="149.1" width="13.6" height="7" fill="#c9c3b9" opacity="0.95" transform="rotate(-4.2 242.7 149.1)"/>
<rect x="258.9" y="147.9" width="13.6" height="7" fill="#c9c3b9" opacity="0.92" transform="rotate(-4.2 258.9 147.9)"/>
<rect x="275.1" y="146.8" width="13.6" height="7" fill="#c9c3b9" opacity="0.89" transform="rotate(-4.2 275.1 146.8)"/>
<rect x="291.3" y="145.6" width="13.6" height="7" fill="#c9c3b9" opacity="0.80" transform="rotate(-4.2 291.3 145.6)"/>
<rect x="307.5" y="144.4" width="13.6" height="7" fill="#c9c3b9" opacity="0.82" transform="rotate(-4.2 307.5 144.4)"/>
<rect x="323.6" y="143.2" width="13.6" height="7" fill="#c9c3b9" opacity="0.78" transform="rotate(-4.2 323.6 143.2)"/>
<rect x="339.8" y="142.0" width="13.6" height="7" fill="#c9c3b9" opacity="0.90" transform="rotate(-4.2 339.8 142.0)"/>
<rect x="0.0" y="177.0" width="14.0" height="7" fill="#c9c3b9" opacity="0.86" transform="rotate(-3.4 0.0 177.0)"/>
<rect x="16.7" y="176.0" width="14.0" height="7" fill="#c9c3b9" opacity="0.91" transform="rotate(-3.4 16.7 176.0)"/>
<rect x="33.4" y="175.0" width="14.0" height="7" fill="#c9c3b9" opacity="0.82" transform="rotate(-3.4 33.4 175.0)"/>
<rect x="50.0" y="174.0" width="14.0" height="7" fill="#c9c3b9" opacity="0.79" transform="rotate(-3.4 50.0 174.0)"/>
<rect x="66.7" y="173.0" width="14.0" height="7" fill="#c9c3b9" opacity="0.91" transform="rotate(-3.4 66.7 173.0)"/>
<rect x="83.4" y="172.0" width="14.0" height="7" fill="#c9c3b9" opacity="0.95" transform="rotate(-3.4 83.4 172.0)"/>
<rect x="100.1" y="171.0" width="14.0" height="7" fill="#c9c3b9" opacity="0.92" transform="rotate(-3.4 100.1 171.0)"/>
<rect x="116.8" y="170.0" width="14.0" height="7" fill="#c9c3b9" opacity="0.91" transform="rotate(-3.4 116.8 170.0)"/>
<rect x="133.5" y="169.0" width="14.0" height="7" fill="#c9c3b9" opacity="0.91" transform="rotate(-3.4 133.5 169.0)"/>
<rect x="150.1" y="168.0" width="14.0" height="7" fill="#c9c3b9" opacity="0.90" transform="rotate(-3.4 150.1 168.0)"/>
<rect x="166.8" y="167.0" width="14.0" height="7" fill="#c9c3b9" opacity="0.80" transform="rotate(-3.4 166.8 167.0)"/>
<rect x="183.5" y="166.0" width="14.0" height="7" fill="#c9c3b9" opacity="0.85" transform="rotate(-3.4 183.5 166.0)"/>
<rect x="200.2" y="165.0" width="14.0" height="7" fill="#c9c3b9" opacity="0.82" transform="rotate(-3.4 200.2 165.0)"/>
<rect x="216.9" y="164.0" width="14.0" height="7" fill="#c9c3b9" opacity="0.76" transform="rotate(-3.4 216.9 164.0)"/>
<rect x="233.5" y="163.0" width="14.0" height="7" fill="#c9c3b9" opacity="0.76" transform="rotate(-3.4 233.5 163.0)"/>
<rect x="250.2" y="162.0" width="14.0" height="7" fill="#c9c3b9" opacity="0.81" transform="rotate(-3.4 250.2 162.0)"/>
<rect x="266.9" y="161.0" width="14.0" height="7" fill="#c9c3b9" opacity="0.80" transform="rotate(-3.4 266.9 161.0)"/>
<rect x="283.6" y="159.9" width="14.0" height="7" fill="#c9c3b9" opacity="0.89" transform="rotate(-3.4 283.6 159.9)"/>
<rect x="300.3" y="158.9" width="14.0" height="7" fill="#c9c3b9" opacity="0.94" transform="rotate(-3.4 300.3 158.9)"/>
<rect x="317.0" y="157.9" width="14.0" height="7" fill="#c9c3b9" opacity="0.84" transform="rotate(-3.4 317.0 157.9)"/>
<rect x="333.6" y="156.9" width="14.0" height="7" fill="#c9c3b9" opacity="0.94" transform="rotate(-3.4 333.6 156.9)"/>
<rect x="70.0" y="94.5" width="9" height="4" fill="#b8b2a8" opacity=".8" transform="rotate(-8.9 70.0 94.5)"/>
<rect x="83.0" y="92.5" width="9" height="4" fill="#b8b2a8" opacity=".8" transform="rotate(-8.9 83.0 92.5)"/>
<rect x="96.0" y="90.5" width="9" height="4" fill="#b8b2a8" opacity=".8" transform="rotate(-8.9 96.0 90.5)"/>
<rect x="109.0" y="88.4" width="9" height="4" fill="#b8b2a8" opacity=".8" transform="rotate(-8.9 109.0 88.4)"/>
<rect x="122.0" y="86.4" width="9" height="4" fill="#b8b2a8" opacity=".8" transform="rotate(-8.9 122.0 86.4)"/>
<rect x="135.0" y="84.4" width="9" height="4" fill="#b8b2a8" opacity=".8" transform="rotate(-8.9 135.0 84.4)"/>
<rect x="148.0" y="82.4" width="9" height="4" fill="#b8b2a8" opacity=".8" transform="rotate(-8.9 148.0 82.4)"/>
<rect x="161.0" y="80.3" width="9" height="4" fill="#b8b2a8" opacity=".8" transform="rotate(-8.9 161.0 80.3)"/>
<rect x="174.0" y="78.3" width="9" height="4" fill="#b8b2a8" opacity=".8" transform="rotate(-8.9 174.0 78.3)"/>
<rect x="187.0" y="76.3" width="9" height="4" fill="#b8b2a8" opacity=".8" transform="rotate(-8.9 187.0 76.3)"/>
<rect x="200.0" y="74.3" width="9" height="4" fill="#b8b2a8" opacity=".8" transform="rotate(-8.9 200.0 74.3)"/>
<rect x="213.0" y="72.2" width="9" height="4" fill="#b8b2a8" opacity=".8" transform="rotate(-8.9 213.0 72.2)"/>
<rect x="226.0" y="70.2" width="9" height="4" fill="#b8b2a8" opacity=".8" transform="rotate(-8.9 226.0 70.2)"/>
<rect x="239.0" y="68.2" width="9" height="4" fill="#b8b2a8" opacity=".8" transform="rotate(-8.9 239.0 68.2)"/>
<rect x="252.0" y="66.1" width="9" height="4" fill="#b8b2a8" opacity=".8" transform="rotate(-8.9 252.0 66.1)"/>
<line x1="70.0" y1="92.0" x2="16.0" y2="224" stroke="#45403c" stroke-width="1.2" opacity=".7"/>
<line x1="82.5" y1="90.0" x2="36.9" y2="224" stroke="#45403c" stroke-width="1.3" opacity=".7"/>
<line x1="95.1" y1="88.0" x2="57.9" y2="224" stroke="#45403c" stroke-width="1.4" opacity=".7"/>
<line x1="107.6" y1="86.0" x2="78.8" y2="224" stroke="#45403c" stroke-width="1.5" opacity=".7"/>
<line x1="120.1" y1="84.0" x2="99.7" y2="224" stroke="#45403c" stroke-width="1.6" opacity=".7"/>
<line x1="132.7" y1="82.0" x2="120.7" y2="224" stroke="#45403c" stroke-width="1.7" opacity=".7"/>
<line x1="145.2" y1="80.0" x2="141.6" y2="224" stroke="#45403c" stroke-width="1.8" opacity=".7"/>
<line x1="157.7" y1="78.0" x2="162.5" y2="224" stroke="#45403c" stroke-width="1.9" opacity=".7"/>
<line x1="170.3" y1="76.0" x2="183.5" y2="224" stroke="#45403c" stroke-width="2.0" opacity=".7"/>
<line x1="182.8" y1="74.0" x2="204.4" y2="224" stroke="#45403c" stroke-width="2.1" opacity=".7"/>
<line x1="195.3" y1="72.0" x2="225.3" y2="224" stroke="#45403c" stroke-width="2.2" opacity=".7"/>
<line x1="207.9" y1="70.0" x2="246.3" y2="224" stroke="#45403c" stroke-width="2.3" opacity=".7"/>
<line x1="220.4" y1="68.0" x2="267.2" y2="224" stroke="#45403c" stroke-width="2.4" opacity=".7"/>
<line x1="232.9" y1="66.0" x2="288.1" y2="224" stroke="#45403c" stroke-width="2.5" opacity=".7"/>
<line x1="245.5" y1="64.0" x2="309.1" y2="224" stroke="#45403c" stroke-width="2.6" opacity=".7"/>
<line x1="258.0" y1="62.0" x2="330.0" y2="224" stroke="#45403c" stroke-width="2.7" opacity=".7"/>
</g>
<polygon points="20,188 330,183 338,226 10,226" fill="#6a665f"/>
<rect x="20.0" y="186" width="4" height="40" fill="#bab5ad" opacity=".7"/>
<rect x="58.8" y="186" width="4" height="40" fill="#bab5ad" opacity=".7"/>
<rect x="97.5" y="186" width="4" height="40" fill="#bab5ad" opacity=".7"/>
<rect x="136.2" y="186" width="4" height="40" fill="#bab5ad" opacity=".7"/>
<rect x="175.0" y="186" width="4" height="40" fill="#bab5ad" opacity=".7"/>
<rect x="213.8" y="186" width="4" height="40" fill="#bab5ad" opacity=".7"/>
<rect x="252.5" y="186" width="4" height="40" fill="#bab5ad" opacity=".7"/>
<rect x="291.2" y="186" width="4" height="40" fill="#bab5ad" opacity=".7"/>
<rect x="330.0" y="186" width="4" height="40" fill="#bab5ad" opacity=".7"/>
<polygon points="20,183 330,177 332,186 18,191" fill="#a8a298" opacity=".55"/>
<rect x="0" y="224" width="345" height="26" fill="#8e8b86"/>
<rect x="0" y="223" width="345" height="12" fill="#a09b93"/>
<path d="M0,236 L22,232 L40,236 L44,250 L0,250 Z" fill="#d2d4d6"/>
<path d="M38,250 L44,240 L62,234 L98,234 L106,240 L108,250 Z" fill="#bfc1c4"/>
<path d="M56,242 L65,237 L95,237 L99,242 Z" fill="#4a4c52"/>
<path d="M140,250 L146,240 L160,234 L200,234 L206,250 Z" fill="#c4c6c8"/>
<path d="M152,243 L162,237 L196,237 L198,243 Z" fill="#3e4046"/>
<path d="M266,250 L272,238 L290,232 L345,232 L345,250 Z" fill="#b4b6b8"/>
<path d="M280,242 L292,235 L330,235 L332,242 Z" fill="#3a3c40"/>
<rect x="120" y="196" width="1.2" height="44" fill="#3a3632"/>
<rect x="117" y="200" width="6" height="8" fill="#d8d2c8" opacity=".9"/>
<rect x="118" y="197" width="4" height="3" fill="#c84a3a"/>
</g>
<rect x="172" y="225" width="173" height="25" fill="#2a2826" opacity=".45"/>
</svg><svg class="abs" style="left:280px;top:60px" width="30" height="122" viewBox="0 0 30 122">
<g fill="none" stroke="#8a8a8a" stroke-width="1.6" opacity=".55"><circle cx="15" cy="15" r="14.6"/><circle cx="15" cy="60" r="14.6"/><circle cx="15" cy="105" r="14.6"/></g>
<g fill="#414141" stroke="#1e1e1e" stroke-width="1">
<circle cx="15" cy="15" r="13.3"/><circle cx="15" cy="60" r="13.3"/><circle cx="15" cy="105" r="13.3"/></g>
<polygon points="15,8 12,15.5 18,15.5" fill="#e01a1a"/><polygon points="12,15.5 18,15.5 15,23.5" fill="#fff"/>
<path d="M9,60 H21 M15,54 V66 M8.5,105 H21.5" stroke="#fff" stroke-width="1.7"/>
</svg>
<div class="t" style="left:177px;top:233px;font-size:9.5px;color:#fff;letter-spacing:-.2px">&#169;2017 Microsoft Corporation | 8/31/2014</div></div>
    <div id="map" class="abs" style="left:345px;top:0;width:345px;height:250px;overflow:hidden"><svg width="345" height="250" viewBox="0 0 345 250"><rect width="345" height="250" fill="#ebe6d7"/>
<g stroke="#ffffff" stroke-linecap="butt">
<line x1="-20.0" y1="-141.6" x2="365.0" y2="63.1" stroke-width="5"/>
<line x1="-20.0" y1="-96.6" x2="365.0" y2="108.1" stroke-width="6"/>
<line x1="-20.0" y1="-50.6" x2="365.0" y2="154.1" stroke-width="6"/>
<line x1="-20.0" y1="-5.6" x2="365.0" y2="199.1" stroke-width="6"/>
<line x1="-20.0" y1="39.4" x2="365.0" y2="244.1" stroke-width="8"/>
<line x1="-20.0" y1="85.4" x2="365.0" y2="290.1" stroke-width="7"/>
<line x1="-20.0" y1="130.4" x2="365.0" y2="335.1" stroke-width="6"/>
<line x1="-20.0" y1="176.4" x2="365.0" y2="381.1" stroke-width="6"/>
<line x1="-20.0" y1="221.4" x2="365.0" y2="426.1" stroke-width="8"/>
<line x1="-20.0" y1="266.4" x2="365.0" y2="471.1" stroke-width="6"/>
<line x1="95.8" y1="-100.9" x2="-185.8" y2="428.9" stroke-width="7"/>
<line x1="179.8" y1="-100.9" x2="-101.8" y2="428.9" stroke-width="8"/>
<line x1="350.8" y1="-100.9" x2="69.2" y2="428.9" stroke-width="8"/>
<line x1="437.8" y1="-100.9" x2="156.2" y2="428.9" stroke-width="9"/>
<line x1="261.8" y1="-100.9" x2="124.8" y2="156.9" stroke-width="5"/>
<line x1="286.8" y1="-100.9" x2="5.2" y2="428.9" stroke-width="6"/>
<polygon points="106.4,144.4 145.4,165 100.3,252 50.3,252" fill="#ebe6d7"/>
<path d="M50.3,252 L104,146 Q106.4,143 110,145 L192,188" fill="none" stroke-width="6" stroke-linejoin="round"/>
<line x1="155.4" y1="146.3" x2="99.1" y2="252.3" stroke-width="6"/>
<g stroke="#f6f4ee" stroke-width="1" fill="none"><path d="M116,160 L70,250 M134,170 L90,250"/></g>
</g>
<text x="301" y="16" font-size="9.5" fill="#7b7771" text-anchor="middle" transform="rotate(0 301 16)" font-family="Liberation Sans">51st Street (6)</text>
<text x="84" y="12" font-size="10" fill="#7b7771" text-anchor="middle" transform="rotate(28 84 12)" font-family="Liberation Sans">E 48th St</text>
<text x="36" y="68" font-size="10" fill="#7b7771" text-anchor="middle" transform="rotate(28 36 68)" font-family="Liberation Sans">E 46th St</text>
<text x="152" y="82" font-size="9" fill="#7b7771" text-anchor="middle" transform="rotate(0 152 82)" font-family="Liberation Sans">270 Park Avenue</text>
<text x="106" y="104" font-size="9" fill="#7b7771" text-anchor="middle" transform="rotate(0 106 104)" font-family="Liberation Sans">383 Madison</text>
<text x="106" y="115" font-size="9" fill="#7b7771" text-anchor="middle" transform="rotate(0 106 115)" font-family="Liberation Sans">Avenue</text>
<text x="26" y="110" font-size="9" fill="#7b7771" text-anchor="middle" transform="rotate(0 26 110)" font-family="Liberation Sans">ed F. French</text>
<text x="22" y="121" font-size="9" fill="#7b7771" text-anchor="middle" transform="rotate(0 22 121)" font-family="Liberation Sans">Building</text>
<text x="211" y="113" font-size="9" fill="#7b7771" text-anchor="middle" transform="rotate(0 211 113)" font-family="Liberation Sans">477 Park Avenue</text>
<text x="185" y="48" font-size="10" fill="#7b7771" text-anchor="middle" transform="rotate(-62 185 48)" font-family="Liberation Sans">Park Ave</text>
<text x="153" y="134" font-size="10" fill="#7b7771" text-anchor="middle" transform="rotate(28 153 134)" font-family="Liberation Sans">E 46th St</text>
<text x="245" y="143" font-size="10" fill="#7b7771" text-anchor="middle" transform="rotate(28 245 143)" font-family="Liberation Sans">E 47th St</text>
<text x="308" y="134" font-size="10" fill="#7b7771" text-anchor="middle" transform="rotate(28 308 134)" font-family="Liberation Sans">E 48th St</text>
<text x="17" y="145" font-size="10" fill="#7b7771" text-anchor="middle" transform="rotate(28 17 145)" font-family="Liberation Sans">44th St</text>
<text x="87" y="166" font-size="10" fill="#7b7771" text-anchor="middle" transform="rotate(-62 87 166)" font-family="Liberation Sans">Vanderbilt Ave</text>
<text x="152" y="177" font-size="10" fill="#7b7771" text-anchor="middle" transform="rotate(28 152 177)" font-family="Liberation Sans">E 45th St</text>
<text x="206" y="175" font-size="10" fill="#7b7771" text-anchor="middle" transform="rotate(-62 206 175)" font-family="Liberation Sans">Lexington Ave</text>
<text x="26" y="193" font-size="10" fill="#7b7771" text-anchor="middle" transform="rotate(28 26 193)" font-family="Liberation Sans">E 43rd St</text>
<text x="113" y="201" font-size="9" fill="#7b7771" text-anchor="middle" transform="rotate(0 113 201)" font-family="Liberation Sans">MetLife Building</text>
<text x="86" y="249" font-size="9" fill="#7b7771" text-anchor="middle" transform="rotate(0 86 249)" font-family="Liberation Sans">Grand Central</text>
<text x="258" y="236" font-size="10" fill="#7b7771" text-anchor="middle" transform="rotate(-62 258 236)" font-family="Liberation Sans">3rd Ave</text>
<text x="202" y="245" font-size="10" fill="#7b7771" text-anchor="middle" transform="rotate(28 202 245)" font-family="Liberation Sans">E 44th</text>
<circle cx="151" cy="63.6" r="6" fill="#7b7570"/><path d="M148.4,62.6 a2.6,2.6 0 1,1 5.2,0 L151,67.1 Z" fill="#fff"/>
<circle cx="106" cy="85.3" r="6" fill="#7b7570"/><path d="M103.4,84.3 a2.6,2.6 0 1,1 5.2,0 L106,88.8 Z" fill="#fff"/>
<circle cx="19.3" cy="89.6" r="6" fill="#7b7570"/><path d="M16.7,88.6 a2.6,2.6 0 1,1 5.2,0 L19.3,93.1 Z" fill="#fff"/>
<circle cx="208.8" cy="94.3" r="6" fill="#7b7570"/><path d="M206.20000000000002,93.3 a2.6,2.6 0 1,1 5.2,0 L208.8,97.8 Z" fill="#fff"/>
<circle cx="113" cy="181" r="6" fill="#7b7570"/><path d="M110.4,180 a2.6,2.6 0 1,1 5.2,0 L113,184.5 Z" fill="#fff"/>
<path d="M172.7,125.5 C169.7,117.5 165.7,111.5 165.7,107.5 A7,7 0 1,1 179.7,107.5 C179.7,111.5 175.7,117.5 172.7,125.5 Z" fill="#5e6e84"/><circle cx="172.7" cy="107.5" r="2.2" fill="#3e4a5a"/>
<rect x="80.6" y="224.5" width="13" height="13" fill="#8a62b8"/><rect x="84.1" y="227.5" width="6" height="5" fill="#fff" opacity=".8"/>
<circle cx="301" cy="-2" r="5" fill="#3a8ee8"/>
</svg></div>
    <div id="info" class="abs" style="left:690px;top:0;width:690px;height:250px">
      <div class="t" style="left:20px;top:23px;font-size:22px;color:#2a8cf4;letter-spacing:1.1px">Park Avenue 245</div>
      <div class="t" style="left:20px;top:49px;font-size:22px;color:#252a33;letter-spacing:1.12px">245 Park Avenue</div>
      <div class="t" style="left:20px;top:80px;font-size:13px;color:#6e7480;letter-spacing:.55px"><span style="text-decoration:underline;text-underline-offset:2px;text-decoration-color:#8a909a">Park Avenue</span> • New York, NY 10017</div>
      <div class="row" style="left:20px;top:122px;width:315px"></div>
      <div class="row" style="left:20px;top:153px;width:315px"></div>
      <div class="row" style="left:20px;top:184px;width:315px"></div>
      <div class="row" style="left:20px;top:215px;width:315px"></div>
      <div class="t lbl" style="left:20px;top:131px">Submarket</div><div class="t lbl" style="right:355px;top:131px;letter-spacing:0">Park Avenue</div>
      <div class="t lbl" style="left:20px;top:162px">Property Type</div><div class="t lbl" style="right:355px;top:162px;letter-spacing:0">Office</div>
      <div class="t lbl" style="left:20px;top:193px">Building Class</div><div class="t lbl" style="right:355px;top:193px;letter-spacing:0">A</div>
      <div class="t lbl" style="left:20px;top:224px">Floors</div><div class="t lbl" style="right:355px;top:224px;letter-spacing:0">45</div>
      <div class="row" style="left:355px;top:122px;width:315px"></div>
      <div class="row" style="left:355px;top:153px;width:315px"></div>
      <div class="row" style="left:355px;top:184px;width:315px"></div>
      <div class="row" style="left:355px;top:215px;width:315px"></div>
      <div class="t lbl" style="left:355px;top:131px">Size</div><div class="t lbl" style="right:20px;top:131px;letter-spacing:0">1,855,000 SF</div>
      <div class="t lbl" style="left:355px;top:162px">Year Built</div><div class="t lbl" style="right:20px;top:162px;letter-spacing:0">1967</div>
      <div class="t lbl" style="left:355px;top:193px">Year Renovated</div><div class="t lbl" style="right:20px;top:193px;letter-spacing:0">2000</div>
      <div class="t lbl" style="left:355px;top:224px">Current Landlord</div><div class="t lbl" style="right:20px;top:224px;letter-spacing:0">HNA Group</div>
    </div>
  </div>

  <div id="card2">
    <div class="t" style="left:15px;top:11px;font-size:21px;color:#2a2e38;letter-spacing:1.27px">Sales History</div>
    <div class="abs" style="left:0;top:44px;width:1380px;height:1px;background:#e2e3e8"></div>
    <div class="abs" style="left:21px;top:61px;width:150px;height:40px;border-radius:2px;background:#2a8cf4"></div>
    <svg class="abs" style="left:39px;top:72px" width="12" height="16" viewBox="0 0 12 16"><path d="M6,1 V10 M2.2,6.5 L6,10.3 L9.8,6.5 M1,14 H11" fill="none" stroke="#fff" stroke-width="1.6"/></svg>
    <div class="t" style="left:62px;top:75px;font-size:13.5px;color:#fff;letter-spacing:.74px">EXPORT&nbsp;&nbsp;(1)</div>
    <div class="abs" style="left:20px;top:167px;width:1340px;height:2px;background:#a3a6ac"></div>
    <div class="t th" style="left:137px;top:126px">Sale Date</div>
    <div class="t th" style="left:289px;top:126px">Total Sale<br>Price</div>
    <div class="t th" style="left:366px;top:126px">Data<br>Source</div>
    <div class="t th" style="left:448px;top:126px">Sale Price (PSF)</div>
    <div class="t th" style="left:600px;top:126px">Buyer / Buyer Rep<br>Companies</div>
    <div class="t th" style="left:752px;top:126px">Seller / Seller Rep<br>Companies</div>
    <div class="t th" style="left:904px;top:126px">Cap Rate<br>(%)</div>
    <div class="t th" style="left:981px;top:126px">Occupancy<br>Rate (%)</div>
    <div class="t th" style="left:1063px;top:126px">Interest (%)</div>
    <div class="t th" style="left:1215px;top:126px">Deed Doc #</div>
    <div class="abs" style="left:27px;top:175px;width:18px;height:18px;border:1px solid #4a4e58;border-radius:3px"></div>
    <div class="abs" style="left:56px;top:173px;width:70px;height:24px;border-radius:2px;background:#2a8cf4"></div>
    <svg class="abs" style="left:84px;top:177px" width="12" height="14" viewBox="0 0 12 14"><path d="M6,1.5 V8.5 M2.8,5.5 L6,8.8 L9.2,5.5 M2,12 H10" fill="none" stroke="#fff" stroke-width="1.5"/></svg>
    <div class="t td" style="left:136px;top:175px">Jan 5, 2017</div>
    <div class="t td" style="left:289px;top:175px">2210.0M</div>
    <div class="t td" style="left:369px;top:175px">CompStak</div>
    <div class="t td" style="left:448px;top:175px">$1,392.66</div>
    <div class="t td" style="left:600px;top:175px">HNA Group</div>
    <div class="t td" style="left:752px;top:175px">Brookfield Property<br>Partners, NYSTRS</div>
    <div class="t td" style="left:904px;top:175px">4.85%</div>
    <div class="t td" style="left:983px;top:175px">94</div>
    <div class="t td" style="left:1063px;top:175px">100.00%</div>
  </div>

</div>
<div class="abs" style="left:132.5px;top:643.5px;width:49.5px;height:49.5px;border-radius:50%;background:#f0625f;z-index:9"></div>
<svg class="abs" style="left:132px;top:643px;z-index:10" width="50" height="50" viewBox="0 0 50 50"><path d="M25,14.5 V38 M15,24.5 L25,14.5 L35,24.5" fill="none" stroke="#fff" stroke-width="2.3"/></svg>
</body></html>
